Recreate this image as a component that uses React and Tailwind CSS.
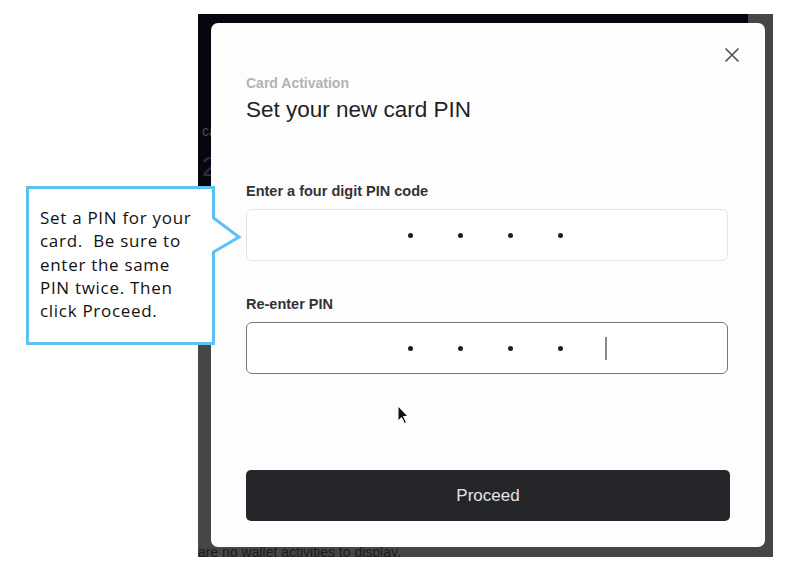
import { useState } from "react";

const DOTS = [0, 1, 2, 3];

function PinField({ focused }) {
  return (
    <div
      className={
        "h-[52px] w-[482px] rounded-[6px] bg-white flex items-center pl-[161px] " +
        (focused
          ? "border-[1.5px] border-[#767676]"
          : "border border-[#e4e4e4]")
      }
    >
      <div className="flex items-center gap-[45px]">
        {DOTS.map((d) => (
          <span key={d} className="block w-[5px] h-[5px] rounded-full bg-[#1e1e1e]" />
        ))}
      </div>
      {focused ? <span className="block ml-[42px] w-[1.5px] h-[23px] bg-[#8a8a8a]" /> : null}
    </div>
  );
}

function Callout() {
  return (
    <div className="absolute left-[26px] top-[186px] w-[218px] h-[160px]">
      {/* speech box with the pointer on its right edge */}
      <svg className="absolute inset-0" width="218" height="160" viewBox="0 0 218 160">
        <path
          d="M1.5 1.5 H187.5 V32 L213 51 L187.5 66 V157.5 H1.5 Z"
          fill="#ffffff"
          stroke="#5bc3f4"
          strokeWidth="3"
        />
      </svg>
      <p className="relative pl-[14px] pt-[20px] text-[17px] leading-[23.3px] tracking-[0.7px] text-[#111] font-['Open_Sans',sans-serif] whitespace-pre">
        {"Set a PIN for your\ncard.  Be sure to\nenter the same\nPIN twice. Then\nclick Proceed."}
      </p>
    </div>
  );
}

export default function App() {
  const [pin] = useState("1234");

  return (
    <div className="relative w-[797px] h-[568px] overflow-hidden bg-white font-['Liberation_Sans',Arial,sans-serif]">
      <div className="relative ml-[198px] mt-[14px] w-[575px] h-[543px] overflow-hidden bg-[#464646]">
        {/* dimmed page behind the dialog */}
        <div className="flex flex-col h-full">
          <div className="w-[550px] h-[185px] bg-[#06060e] pl-[4px] pt-[108px] flex flex-col">
            <span className="text-[14px] leading-[18px] text-[#4d4d58]">cards</span>
            <span className="mt-[12px] text-[28px] leading-[30px] text-[#2c2c48]">2,450.00</span>
          </div>
          <div className="flex-1" />
          <p className="mb-[-3px] h-4 text-[14px] leading-4 text-[#1b1b1b] whitespace-nowrap">
            are no wallet activities to display.
          </p>
        </div>

        {/* dialog */}
        <div className="absolute left-[13px] top-[9px] w-[554px] h-[524px] rounded-[7px] bg-[#fdfdfd] px-[35px] pt-[51px] flex flex-col">
          <button className="absolute right-[25px] top-[24px] w-4 h-4 flex items-center justify-center">
            <svg width="14" height="14" viewBox="0 0 14 14">
              <path d="M1 1 L13 13 M13 1 L1 13" stroke="#555" strokeWidth="1.7" strokeLinecap="round" />
            </svg>
          </button>

          <p className="text-[14px] leading-[18px] font-bold text-[#b3b3b3]">Card Activation</p>
          <h2 className="mt-[4px] text-[22.5px] leading-[28px] text-[#1f1f1f]">Set your new card PIN</h2>

          <label className="mt-[58px] text-[14.5px] leading-[18px] font-bold text-[#333]">
            Enter a four digit PIN code
          </label>
          <div className="mt-[9px]">
            <PinField value={pin} />
          </div>

          <label className="mt-[34px] text-[14.5px] leading-[18px] font-bold text-[#333]">
            Re-enter PIN
          </label>
          <div className="mt-[9px]">
            <PinField value={pin} focused />
          </div>

          <button className="mt-[96px] h-[51px] w-[484px] rounded-[5px] bg-[#25262a] text-[17px] text-[#e4e4e4]">
            Proceed
          </button>

          {/* mouse pointer */}
          <svg className="absolute left-[186px] top-[382px]" width="13" height="20" viewBox="0 0 13 20">
            <path
              d="M1 1 L1 16 L4.5 12.5 L7.5 18.5 L9.5 17.5 L6.5 11.5 L11 11.5 Z"
              fill="#111"
              stroke="#fff"
              strokeWidth="1"
              strokeLinejoin="round"
            />
          </svg>
        </div>
      </div>

      <Callout />
    </div>
  );
}
